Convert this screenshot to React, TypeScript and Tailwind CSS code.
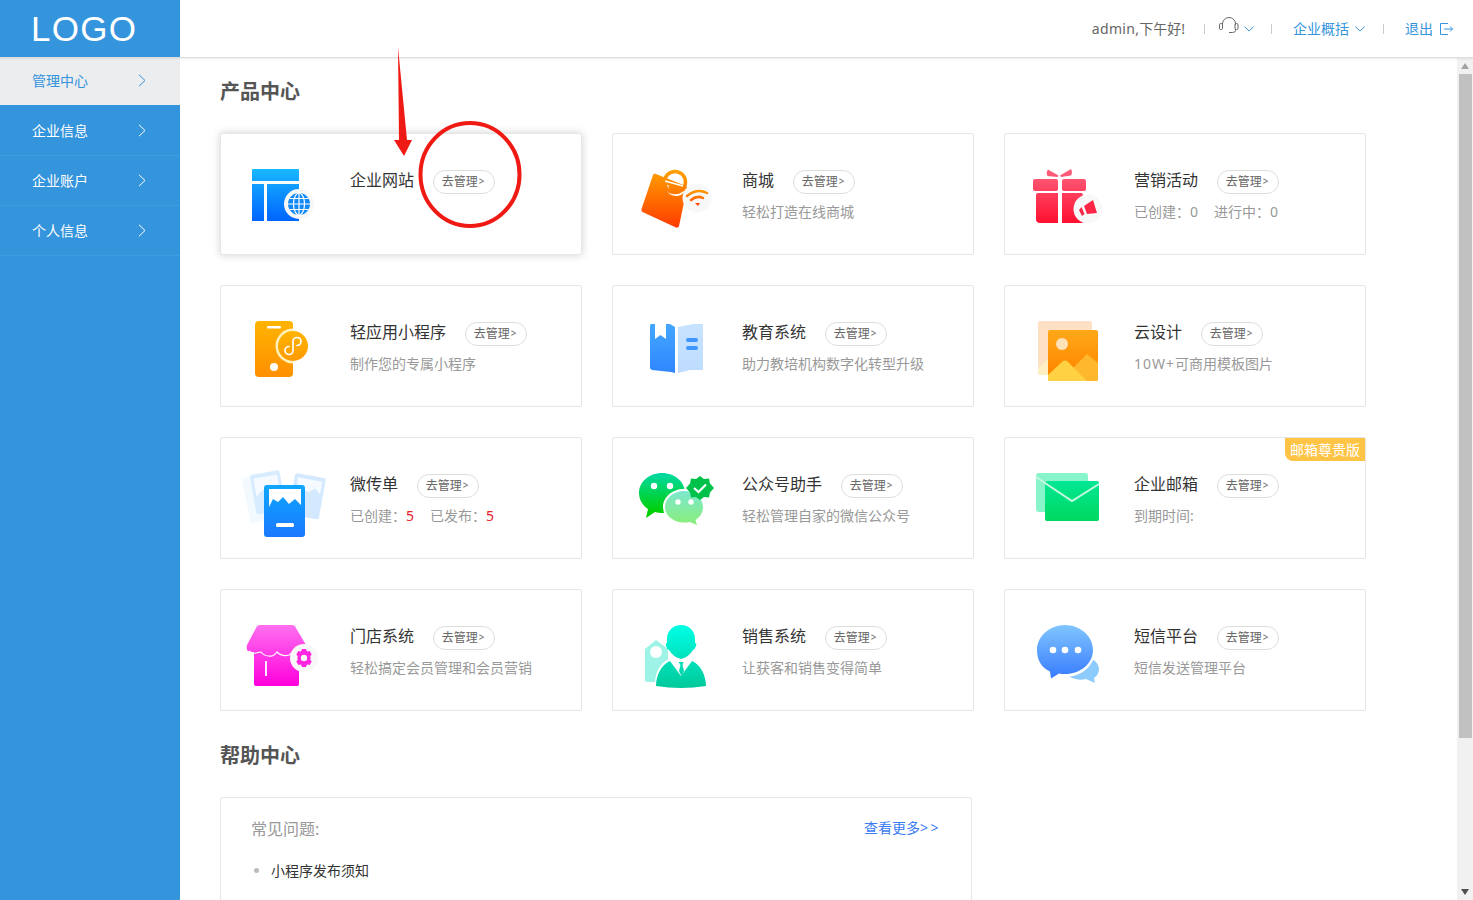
import type { ReactNode } from 'react';

const font = "font-['Noto_Sans','Noto_Sans_CJK_SC',sans-serif]";

function Grad({ id, from, to, y1 = 10, y2 = 66 }: { id: string; from: string; to: string; y1?: number; y2?: number }) {
  return (
    <linearGradient id={id} gradientUnits="userSpaceOnUse" x1="0" y1={y1} x2="0" y2={y2}>
      <stop offset="0" stopColor={from} />
      <stop offset="1" stopColor={to} />
    </linearGradient>
  );
}

function Ico({ children }: { children: ReactNode }) {
  return (
    <svg width="80" height="70" viewBox="0 0 80 70" className="mt-[25px] shrink-0 overflow-visible">
      {children}
    </svg>
  );
}

function SiteIcon() {
  return (
    <Ico>
      <defs><Grad id="site" from="#18b8ff" to="#0064ff" y1={10} y2={62} /></defs>
      <path d="M13 10h45a1 1 0 0 1 1 1v11H12V11a1 1 0 0 1 1-1z" fill="url(#site)" />
      <rect x="12" y="25" width="12" height="37" fill="url(#site)" />
      <rect x="27" y="25" width="32" height="37" fill="url(#site)" />
      <circle cx="59" cy="45" r="15" fill="#f8f8f8" />
      <circle cx="59" cy="45" r="11" fill="#1489f5" />
      <g stroke="#fff" strokeWidth="1.2" fill="none">
        <path d="M48 45h22M49.5 39.5h19M49.5 50.5h19M59 34v22" />
        <ellipse cx="59" cy="45" rx="5.5" ry="11" />
      </g>
    </Ico>
  );
}

function ShopIcon() {
  return (
    <Ico>
      <defs>
        <Grad id="shop" from="#ff9f00" to="#ff3a00" y1={12} y2={69} />
        <Grad id="wifi" from="#ff9f00" to="#ff4a00" y1={30} y2={46} />
      </defs>
      <path d="M24 15l30 12a2 2 0 0 1 1 2.500L47 67a2.500 2.500 0 0 1-3 1.500L10.500 53A2.500 2.500 0 0 1 9.500 50L21 16a2 2 0 0 1 3-1z" fill="url(#shop)" />
      <path d="M35 26a9 9 0 0 0 16 6" fill="none" stroke="#fff" strokeWidth="3" />
      <circle cx="43" cy="23" r="10.500" fill="none" stroke="url(#shop)" strokeWidth="3.500" />
      <path d="M33 22l18 5" stroke="#fff" strokeWidth="1.500" />
      <circle cx="65" cy="39" r="14.500" fill="#f8f8f8" />
      <g fill="none" stroke="url(#wifi)" strokeWidth="2.500" strokeLinecap="round">
        <path d="M55 37q10-8 20-3" />
        <path d="M59 41q6-5 12-2" />
      </g>
      <path d="M63 44l5 0-2 3z" fill="#ff4a00" />
    </Ico>
  );
}

function GiftIcon() {
  return (
    <Ico>
      <defs>
        <Grad id="gift" from="#ff6480" to="#ff1030" y1={10} y2={64} />
      </defs>
      <path d="M24 10.500l10.500 6-1 1.500-10-1q-2-3.500.5-6.500zM47 10q2 3.500 0 6.500l-10 1.500-1-1.500z" fill="url(#gift)" />
      <rect x="9" y="20" width="25" height="12" rx="2" fill="url(#gift)" />
      <rect x="38" y="20" width="24" height="12" rx="2" fill="url(#gift)" />
      <path d="M14 34h20v30H16a4 4 0 0 1-4-4V36a2 2 0 0 1 2-2z" fill="url(#gift)" />
      <path d="M38 34h19a2 2 0 0 1 2 2v28H38z" fill="url(#gift)" />
      <circle cx="64" cy="50" r="14.500" fill="#f8f8f8" />
      <path d="M60 47l9-6 4 13-10 1z" fill="#ff2545" />
      <path d="M55 51l2.500-3 3 7-2.500 2z" fill="#ff2545" />
    </Ico>
  );
}

function PhoneIcon() {
  return (
    <Ico>
      <defs>
        <Grad id="phone" from="#ffb400" to="#ff8f00" y1={10} y2={66} />
        <Grad id="mini" from="#ffb400" to="#ff9a00" y1={20} y2={50} />
        <clipPath id="phoneClip"><rect x="15" y="10" width="38" height="56" rx="4" /></clipPath>
      </defs>
      <rect x="15" y="10" width="38" height="56" rx="4" fill="url(#phone)" />
      <rect x="27" y="15" width="14" height="2.500" rx="1" fill="#fff" />
      <circle cx="34" cy="56" r="4" fill="#fff" />
      <circle cx="53" cy="35" r="17.500" fill="#fff1b8" clipPath="url(#phoneClip)" />
      <circle cx="53" cy="35" r="15" fill="url(#mini)" />
      <path d="M49 35.500a4 4 0 0 0-4 4a4 4 0 0 0 8 0v-9a4 4 0 1 1 4 4" fill="none" stroke="#fff" strokeWidth="1.700" strokeLinecap="round" />
    </Ico>
  );
}

function BookIcon() {
  return (
    <Ico>
      <defs>
        <Grad id="book" from="#44a7ff" to="#2f86ff" y1={13} y2={62} />
        <Grad id="bookR" from="#c8e3ff" to="#bddcff" y1={13} y2={62} />
      </defs>
      <path d="M19 13h4v15l5.500-4 5.500 4V13l4 0 5 3v46l-4-1-19-2a3 3 0 0 1-2-2V15a2 2 0 0 1 1-2z" fill="url(#book)" />
      <path d="M46 16l15-3h10v46H58l-12 3z" fill="url(#bookR)" />
      <rect x="54" y="27" width="12" height="4" rx="2" fill="#3f97fb" />
      <rect x="54" y="35" width="12" height="4" rx="2" fill="#3f97fb" />
    </Ico>
  );
}

function PictureIcon() {
  return (
    <Ico>
      <defs>
        <Grad id="pic" from="#ffa818" to="#ff8800" y1={19} y2={60} />
        <clipPath id="picClip"><rect x="24" y="19" width="50" height="51" rx="2" /></clipPath>
      </defs>
      <rect x="14" y="10" width="54" height="54" rx="2" fill="#fee1c4" />
      <path d="M14 57l10-9v16H16a2 2 0 0 1-2-2z" fill="#fff0c4" />
      <rect x="24" y="19" width="50" height="51" rx="2" fill="url(#pic)" />
      <circle cx="38" cy="33" r="6" fill="#ffe2b8" />
      <g clipPath="url(#picClip)">
        <path d="M46 60l17-17 11 9v18H46z" fill="#ffb82e" />
        <path d="M24 64l15-14q2-1 4 0l20 20H24z" fill="#ffd143" />
      </g>
    </Ico>
  );
}

function FlyerIcon() {
  return (
    <Ico>
      <defs><Grad id="fly" from="#0ea8ff" to="#1a78ff" y1={22} y2={74} /></defs>
      <g fill="#f2f9ff" transform="rotate(-12 20 35)"><rect x="6" y="12" width="30" height="46" rx="2" /></g>
      <g fill="#d8ecff" transform="rotate(-10 24 30)">
        <rect x="13" y="10" width="30" height="40" rx="2" />
        <path d="M16 14h24v10l-6 6-6-6-12 8z" fill="#f4faff" />
      </g>
      <g fill="#d3e9ff" transform="rotate(10 60 30)">
        <rect x="52" y="11" width="31" height="42" rx="2" />
        <path d="M55 15h25v13l-6-5-6 5-12-6z" fill="#f4faff" />
      </g>
      <rect x="24" y="22" width="41" height="52" rx="3" fill="url(#fly)" />
      <path d="M29 26h32v16l-6-6-6 5-6-7-5 5-5-3-4 8z" fill="#fff" />
      <rect x="36" y="60" width="18" height="4" rx="1.500" fill="#fff" />
    </Ico>
  );
}

function WechatIcon() {
  return (
    <Ico>
      <defs>
        <Grad id="wx" from="#00d9a6" to="#00cf00" y1={10} y2={50} />
        <Grad id="wx2" from="#7be8cf" to="#8aee78" y1={28} y2={62} />
      </defs>
      <path d="M30 10c13 0 23 9 23 20s-10 20-23 20q-4 0-7-1l-9 6 2-9C10 42 7 36 7 30 7 19 17 10 30 10z" fill="url(#wx)" />
      <circle cx="22" cy="23" r="3.200" fill="#fff" />
      <circle cx="38" cy="23" r="3.200" fill="#fff" />
      <path d="M52 26c11.500 0 21 8 21 18 0 6-3.500 11-8 14l2 6-8-3q-3 .7-7 .7c-11.500 0-21-7.700-21-17.700s9.500-18 21-18z" fill="#fff" />
      <path d="M52 28c10.500 0 19 7 19 16 0 6-3.300 10-7.500 13l1.500 5-7-3q-3 .6-6 .6c-10.500 0-19-7-19-15.600s8.500-16 19-16z" fill="url(#wx2)" />
      <circle cx="46" cy="39" r="2.700" fill="#fff" />
      <circle cx="59" cy="39" r="2.700" fill="#fff" />
      <path d="M68 13l4 3 5-.5 1 5 4 4.500-4 4.500-1 5-5-.5-4 3-4-3-5 .5-1-5-4-4.500 4-4.500 1-5 5 .5z" fill="#00c24a" />
      <path d="M62 25l4.500 4 7.500-7.500" fill="none" stroke="#fff" strokeWidth="2.200" />
    </Ico>
  );
}

function MailIcon() {
  return (
    <Ico>
      <defs><Grad id="mail" from="#00e794" to="#00d85f" y1={18} y2={58} /></defs>
      <rect x="12" y="10" width="52" height="39" rx="3" fill="#87f5c9" />
      <rect x="21" y="18" width="54" height="40" rx="2" fill="url(#mail)" />
      <path d="M12 14l36 24 27-17" fill="none" stroke="#c3f9e0" strokeWidth="2" />
    </Ico>
  );
}

function StoreIcon() {
  return (
    <Ico>
      <defs><Grad id="store" from="#ff70f0" to="#ff00dc" y1={10} y2={71} /></defs>
      <rect x="14" y="30" width="45" height="41" rx="2" fill="url(#store)" />
      <path d="M20 10h32q3 0 4 3l10 17q1 3-1 5a9 9 0 0 1-11 1 9 9 0 0 1-13 0 9 9 0 0 1-12 0 9 9 0 0 1-12 0 9 9 0 0 1-9 0q-2-2-1-6l9-17q1-3 4-3z" fill="url(#store)" />
      <path d="M9 36q3 3 7 2t5-1q4 5 11 4 3-1 5-4 5 5 12 3 2-1 4-3 3 4 7 2" fill="none" stroke="#fff" strokeWidth="1.200" />
      <path d="M26 46v15" stroke="#fff" strokeWidth="1.800" />
      <circle cx="64" cy="43" r="14" fill="#f8f8f8" />
      <path d="M62 34h4l1 2.500 2.700-.5 2 3.400-1.700 2 .8 1.600-.8 1.600 1.700 2-2 3.400-2.700-.5-1 2.500h-4l-1-2.500-2.700.5-2-3.400 1.700-2-.8-1.600.8-1.600-1.700-2 2-3.400 2.700.5z" fill="#ff24e0" />
      <circle cx="64" cy="43" r="3.200" fill="#f8f8f8" />
    </Ico>
  );
}

function SalesIcon() {
  return (
    <Ico>
      <defs><Grad id="sale" from="#00ffe6" to="#00c99a" y1={10} y2={73} /></defs>
      <path d="M24 25l12 9v33H15a2 2 0 0 1-2-2V34z" fill="#9df4e6" />
      <circle cx="24" cy="37" r="6" fill="#fff" />
      <path d="M49 10c8 0 14 6 14 14v4q2 0 1 3-1 3-3 4-4 7-12 9-8-2-12-9-2-1-3-4-1-3 1-3v-4c0-8 6-14 14-14z" fill="url(#sale)" />
      <path d="M37 44C28 48 22 58 23 73q26 4 52 0c1-15-5-25-14-29L49 62z" fill="#fff" />
      <path d="M38 46C30 49 24 60 24 71q25 4 50 0c0-11-6-22-14-25L49 61z" fill="url(#sale)" />
      <path d="M46.500 47h5l-1 3 1.500 6-2.500 5-2.500-5 1.500-6z" fill="url(#sale)" />
    </Ico>
  );
}

function ChatIcon() {
  return (
    <Ico>
      <defs>
        <Grad id="sms" from="#80c6ff" to="#3d80ff" y1={10} y2={60} />
      </defs>
      <path d="M58 40c9 2 17 7 17 14 0 4-2 7-5 9l1 5-9-4q-4 1-8 .5-7-1-12-5z" fill="#8ccbfb" />
      <path d="M41 8c16 0 30 11 30 27s-14 27-30 27q-3 0-6-.5L27 66l-1-7C17 55 11 46 11 35 11 19 25 8 41 8z" fill="#fff" />
      <path d="M41 10c15 0 28 11 28 25S56 59 41 59q-3 0-6-.5l-8 5-1-7c-9-4-13-12-13-21.500C13 21 26 10 41 10z" fill="url(#sms)" />
      <circle cx="29" cy="35" r="3.300" fill="#fff" />
      <circle cx="41" cy="35" r="3.300" fill="#fff" />
      <circle cx="54" cy="35" r="3.300" fill="#fff" />
    </Ico>
  );
}

function Count({ label, value, red }: { label: string; value: string; red?: boolean }) {
  return (
    <span>
      {label}：<span className={red ? 'text-[#e6212a]' : 'text-[#999]'}>{value}</span>
    </span>
  );
}

const products: { title: string; icon: ReactNode; sub: ReactNode; badge?: string }[] = [
  { title: '企业网站', icon: <SiteIcon />, sub: null },
  { title: '商城', icon: <ShopIcon />, sub: '轻松打造在线商城' },
  { title: '营销活动', icon: <GiftIcon />, sub: <span className="flex gap-4"><Count label="已创建" value="0" /><Count label="进行中" value="0" /></span> },
  { title: '轻应用小程序', icon: <PhoneIcon />, sub: '制作您的专属小程序' },
  { title: '教育系统', icon: <BookIcon />, sub: '助力教培机构数字化转型升级' },
  { title: '云设计', icon: <PictureIcon />, sub: <><span className="tracking-[1px]">10W+</span>可商用模板图片</> },
  { title: '微传单', icon: <FlyerIcon />, sub: <span className="flex gap-4"><Count label="已创建" value="5" red /><Count label="已发布" value="5" red /></span> },
  { title: '公众号助手', icon: <WechatIcon />, sub: '轻松管理自家的微信公众号' },
  { title: '企业邮箱', icon: <MailIcon />, sub: '到期时间:', badge: '邮箱尊贵版' },
  { title: '门店系统', icon: <StoreIcon />, sub: '轻松搞定会员管理和会员营销' },
  { title: '销售系统', icon: <SalesIcon />, sub: '让获客和销售变得简单' },
  { title: '短信平台', icon: <ChatIcon />, sub: '短信发送管理平台' },
];

const menu = ['管理中心', '企业信息', '企业账户', '个人信息'];

function Chevron({ className }: { className: string }) {
  return (
    <svg width="8" height="13" viewBox="0 0 8 13" className={className}>
      <path d="M1 .8l6 5.700-6 5.700" fill="none" stroke="currentColor" strokeWidth="1" />
    </svg>
  );
}

function Caret({ className }: { className: string }) {
  return (
    <svg width="10" height="6" viewBox="0 0 10 6" className={className}>
      <path d="M.5.700L5 5l4.500-4.300" fill="none" stroke="currentColor" strokeWidth="1" />
    </svg>
  );
}

function ProductCard({ title, icon, sub, badge, active }: { title: string; icon: ReactNode; sub: ReactNode; badge?: string; active: boolean }) {
  return (
    <div className={`relative flex h-[122px] rounded-[2px] border border-[#e6e6e6] bg-white pl-[19px] ${active ? 'shadow-[0_0_8px_rgba(0,0,0,0.18)]' : ''}`}>
      {icon}
      <div className="ml-[30px] pt-[35px]">
        <div className="flex h-[24px] items-center">
          <span className="mb-[2px] text-[16px] leading-[24px] text-[#333]">{title}</span>
          <span className="ml-[19px] mt-[1px] flex h-[24px] w-[62px] items-center justify-center rounded-full border border-[#ddd] pr-[2px] text-[12px] text-[#666]">
            去管理<span className="ml-[1px] text-[10px]">&gt;</span>
          </span>
        </div>
        <div className="mt-[7px] h-[24px] text-[14px] leading-[24px] text-[#999]">{sub}</div>
      </div>
      {badge && (
        <span className="absolute right-0 top-0 flex h-[23px] w-[80px] items-center justify-center rounded-bl-[8px] bg-[#ffc446] text-[14px] text-white">{badge}</span>
      )}
      {active && (
        <svg width="140" height="200" viewBox="0 0 140 200" className="pointer-events-none absolute left-[170px] top-[-90px] z-20 overflow-visible">
          <path d="M7 3l1 93H3l10 16 8-16h-5z" fill="#f01a14" />
          <ellipse cx="79" cy="130.500" rx="49.500" ry="51.500" fill="none" stroke="#f01a14" strokeWidth="4" />
        </svg>
      )}
    </div>
  );
}

export default function App() {
  return (
    <div className={`flex h-screen flex-col overflow-hidden bg-white ${font}`}>
      <header className="z-10 flex h-[58px] shrink-0 items-center border-b border-[#dedede] bg-white shadow-[0_1px_2px_rgba(0,0,0,0.08)]">
        <div className="flex h-full w-[180px] items-center bg-[#3494dc] pl-[31px] pt-[1px] font-['Liberation_Sans',sans-serif] text-[35px] tracking-[1.300px] text-white">LOGO</div>
        <div className="flex flex-1 items-center justify-end pr-[20px] text-[14px]">
          <span className="text-[#666]"><span className="tracking-[0.3px]">admin,</span>下午好!</span>
          <span className="ml-[19px] mr-[14px] h-[10px] w-px bg-[#ccc]" />
          <svg width="20" height="17" viewBox="0 0 20 17" className="mb-[6px] text-[#666]">
            <path d="M3.500 8V7a6.500 6.500 0 0 1 13 0v1M16.500 12v1.500q0 2-3 2h-3.500" fill="none" stroke="currentColor" strokeWidth="1" />
            <rect x=".5" y="6.500" width="3" height="6" rx="1.200" fill="none" stroke="currentColor" strokeWidth="1" />
            <rect x="16" y="6.500" width="3" height="6" rx="1.200" fill="none" stroke="currentColor" strokeWidth="1" />
          </svg>
          <Caret className="ml-[5px] text-[#3494dc]" />
          <span className="ml-[17px] mr-[18px] h-[10px] w-px bg-[#ccc]" />
          <span className="ml-[3px] text-[#3494dc]">企业概括</span>
          <Caret className="ml-[6px] text-[#3494dc]" />
          <span className="mx-[18px] h-[10px] w-px bg-[#ccc]" />
          <span className="ml-[3px] text-[#3494dc]">退出</span>
          <svg width="13" height="12" viewBox="0 0 13 12" className="ml-[7px] text-[#3494dc]">
            <path d="M8 .5H.5v11H8M4 6h8.500M10 3.500L12.500 6 10 8.500" fill="none" stroke="currentColor" strokeWidth="1" />
          </svg>
        </div>
      </header>

      <div className="flex min-h-0 flex-1">
        <aside className="w-[180px] shrink-0 bg-[#3494dc]">
          {menu.map((m, i) => (
            <div
              key={m}
              className={`flex items-center justify-between pl-[32px] pr-[34px] text-[14px] ${
                i === 0
                  ? 'h-[47px] bg-[#ecedef] pb-[2px] text-[#3494dc]'
                  : i === 1
                    ? 'h-[51px] border-b border-[#3f9ce0] pt-[1px] text-white'
                    : 'h-[50px] border-b border-[#3f9ce0] text-white'
              }`}
            >
              <span>{m}</span>
              <Chevron className={i === 0 ? 'text-[#3494dc]' : 'text-white'} />
            </div>
          ))}
        </aside>

        <main className="min-w-0 flex-1 pl-[40px]">
          <h2 className="mt-[19px] h-[30px] text-[20px] font-bold leading-[30px] text-[#555]">产品中心</h2>
          <div className="mt-[26px] grid w-[1146px] grid-cols-[362px_362px_362px] gap-[30px]">
            {products.map((p, i) => (
              <ProductCard
                key={p.title}
                title={p.title}
                icon={p.icon}
                badge={p.badge}
                active={i === 0}
                sub={p.sub}
              />
            ))}
          </div>
          <h2 className="mt-[30px] h-[30px] text-[20px] font-bold leading-[30px] text-[#555]">帮助中心</h2>
          <div className="mt-[26px] h-[200px] w-[752px] rounded-[2px] border border-[#e6e6e6] px-[30px] pt-[19px]">
            <div className="flex h-[24px] items-center justify-between">
              <span className="text-[16px] text-[#999]">常见问题:</span>
              <span className="mb-[3px] text-[14px] text-[#3b7cf5]">查看更多<span className="tracking-[2.5px]">&gt;&gt;</span></span>
            </div>
            <div className="mt-[17px] flex h-[24px] items-center pl-[3px] text-[14px] text-[#333]">
              <span className="mr-[12px] h-[5px] w-[5px] rounded-full bg-[#bbb]" />
              小程序发布须知
            </div>
          </div>
        </main>

        <div className="flex w-[16px] shrink-0 flex-col bg-[#f1f1f1]">
          <svg width="16" height="6" viewBox="0 0 16 6" className="mt-[5px] text-[#a3a3a3]">
            <path d="M8 0l4 6H4z" fill="currentColor" />
          </svg>
          <div className="ml-[2px] mt-[5px] h-[664px] w-[13px] bg-[#c1c1c1]" />
          <svg width="16" height="6" viewBox="0 0 16 6" className="mt-auto mb-[5px] text-[#505050]">
            <path d="M8 6L4 0h8z" fill="currentColor" />
          </svg>
        </div>
      </div>
    </div>
  );
}
